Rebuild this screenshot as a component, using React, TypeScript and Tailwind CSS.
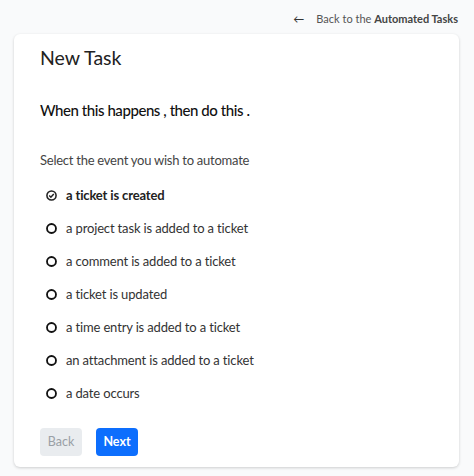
import React from "react";

const items = [
  "a ticket is created",
  "a project task is added to a ticket",
  "a comment is added to a ticket",
  "a ticket is updated",
  "a time entry is added to a ticket",
  "an attachment is added to a ticket",
  "a date occurs",
];

export default function App() {
  return (
    <div className="w-[474px] h-[476px] bg-[#f9fafb] text-[#333] overflow-hidden" style={{ fontFamily: "Lato, 'Open Sans', sans-serif" }}>
      <div className="h-[34px] flex items-center justify-end pr-[16px] pt-[4px] text-[11px] text-[#555]">
        <span className="mr-[12px] text-[11px] text-[#333]">←</span>
        <span>Back to the <span className="font-bold text-[#444]">Automated Tasks</span></span>
      </div>
      <div className="ml-[14px] w-[445px] h-[433px] bg-white rounded-[6px] shadow-[0_1px_3px_rgba(0,0,0,0.18)] pl-[26px] pt-[10px]">
        <h1 className="text-[19.5px] leading-[28px] text-[#222]">New Task</h1>
        <p className="mt-[28px] text-[15px] leading-[20px] font-medium text-[#111] tracking-[-0.44px]">When this happens , then do this .</p>
        <p className="mt-[31px] text-[13px] leading-[18px] text-[#444] tracking-[-0.25px]">Select the event you wish to automate</p>
        <div className="mt-[10px] flex flex-col">
          {items.map((t, i) => (
            <div key={t} className="h-[33px] flex items-center">
              <span className="w-[26px] pl-[6px] flex items-center">
                {i === 0 ? (
                  <svg width="11" height="11" viewBox="0 0 12 12">
                    <circle cx="6" cy="6" r="5" fill="none" stroke="#222" strokeWidth="1.7" />
                    <path d="M3.5 6.1 L5.3 7.9 L8.5 4.3" fill="none" stroke="#222" strokeWidth="1.6" />
                  </svg>
                ) : (
                  <svg width="11" height="11" viewBox="0 0 12 12">
                    <circle cx="6" cy="6" r="4.9" fill="none" stroke="#111" strokeWidth="2" />
                  </svg>
                )}
              </span>
              <span className={`text-[13px] tracking-[-0.15px] ${i === 0 ? "font-bold text-[#222]" : "text-[#333]"}`}>{t}</span>
            </div>
          ))}
        </div>
        <div className="mt-[18px] flex gap-[14px]">
          <button className="w-[42px] h-[28px] rounded-[4px] bg-[#e9ecef] text-[#9aa0a6] text-[12.5px]">Back</button>
          <button className="w-[42px] h-[28px] rounded-[4px] bg-[#0d6efd] text-white text-[12.5px] font-bold">Next</button>
        </div>
      </div>
    </div>
  );
}
